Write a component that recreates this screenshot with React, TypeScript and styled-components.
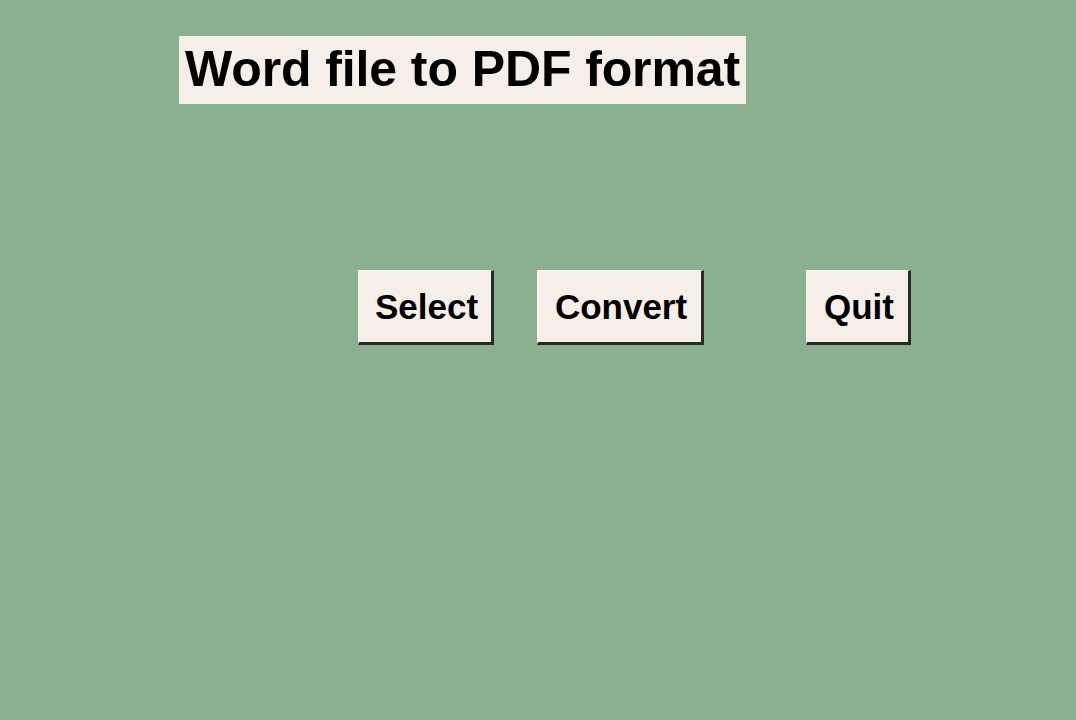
import React from "react";
import styled, { createGlobalStyle } from "styled-components";

const Global = createGlobalStyle`
  html, body { margin: 0; padding: 0; background: #8ab08f; }
  body { font-family: "Liberation Sans", Arial, sans-serif; }
`;

const Page = styled.div`
  width: 1076px;
  height: 720px;
  background: #8ab08f;
  padding: 36px 0 0 179px;
  box-sizing: border-box;
  display: flex;
  flex-direction: column;
  align-items: flex-start;
`;

const Title = styled.h1`
  margin: 0;
  background: #f6efe9;
  color: #000;
  font-family: "Liberation Sans", Arial, sans-serif;
  font-weight: bold;
  font-size: 50px;
  letter-spacing: -0.1px;
  line-height: 66px;
  height: 68px;
  width: 567px;
  box-sizing: border-box;
  padding: 0 0 0 6px;
  white-space: nowrap;
`;

const Row = styled.div`
  display: flex;
  align-items: flex-start;
  margin: 166px 0 0 179px;
`;

const Button = styled.button<{ $w: number; $ml: number }>`
  width: ${(p) => p.$w}px;
  height: 75px;
  margin-left: ${(p) => p.$ml}px;
  box-sizing: border-box;
  background: #f6efe9;
  color: #000;
  font-family: "Liberation Sans", Arial, sans-serif;
  font-weight: bold;
  font-size: 35px;
  border-style: solid;
  border-width: 1px 3px 3px 1px;
  border-color: #fbf8f5 #2a2a26 #2a2a26 #fbf8f5;
  padding: 0 0 0 3px;
  cursor: pointer;
`;

export default function App() {
  return (
    <>
      <Global />
      <Page>
        <Title>Word file to PDF format</Title>
        <Row>
          <Button $w={136} $ml={0}>Select</Button>
          <Button $w={167} $ml={43}>Convert</Button>
          <Button $w={105} $ml={102}>Quit</Button>
        </Row>
      </Page>
    </>
  );
}
